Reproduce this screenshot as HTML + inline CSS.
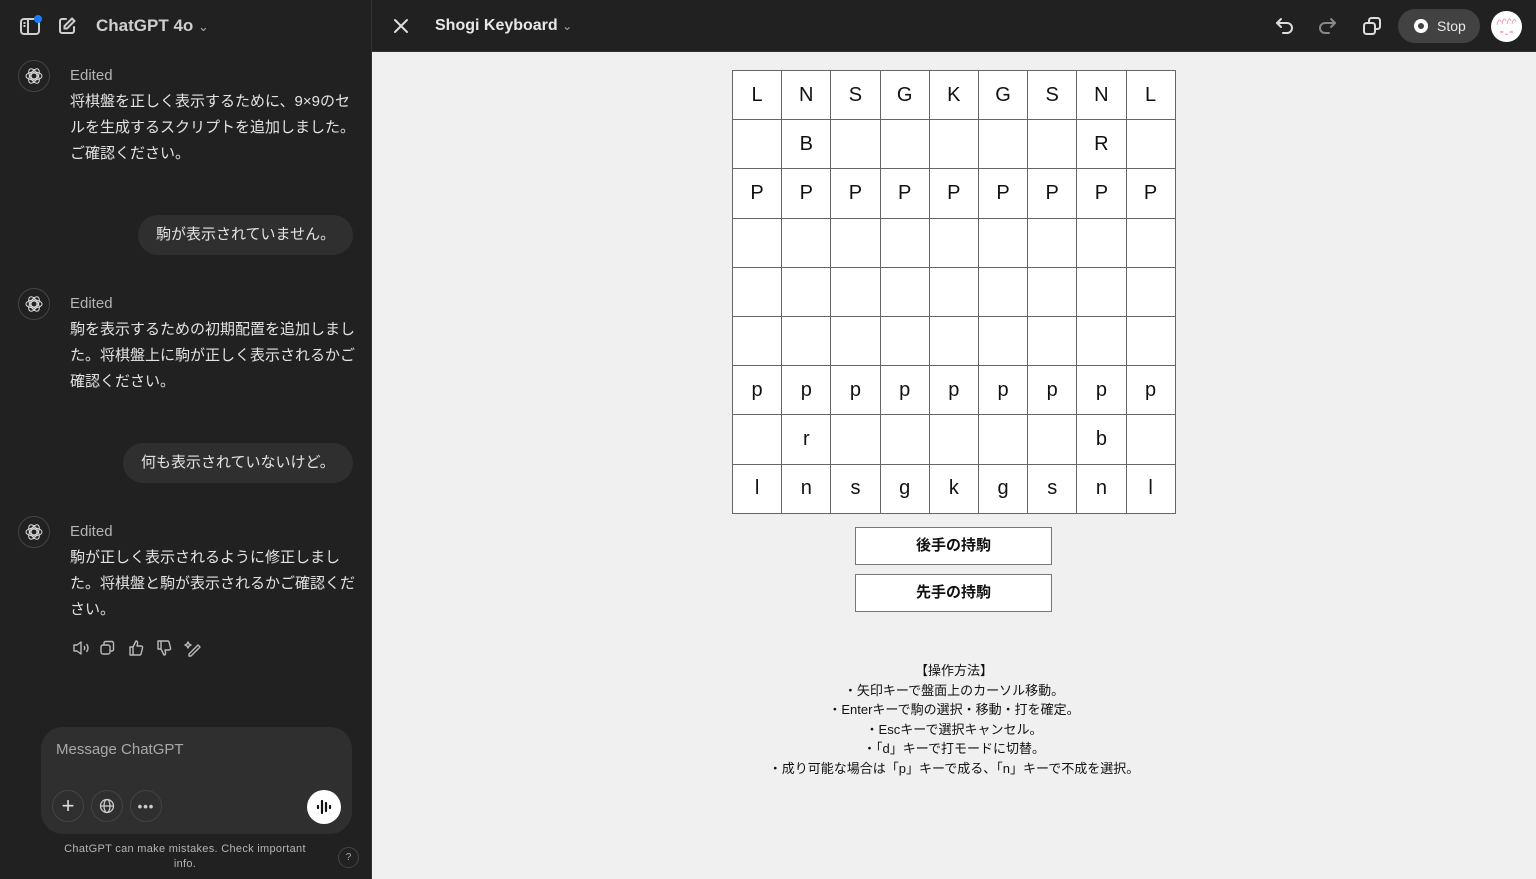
<!DOCTYPE html>
<html><head><meta charset="utf-8"><style>
*{box-sizing:border-box;margin:0;padding:0}
body{width:1536px;height:879px;overflow:hidden;background:#212121;font-family:"Liberation Sans","Noto Sans CJK JP",sans-serif;position:relative;color:#ececec}
.abs{position:absolute}
.side{left:0;top:0;width:371px;height:879px;background:#212121}
.divider{left:371px;top:0;width:1px;height:879px;background:#333}
.top{left:372px;top:0;width:1164px;height:52px;background:#212121;border-bottom:1px solid #333}
.main{left:372px;top:52px;width:1164px;height:827px;background:#f0f0f0}
.av{width:32px;height:32px;border-radius:50%;border:1px solid #444;display:flex;align-items:center;justify-content:center}
.edited{color:#b4b4b4;font-size:15px}
.msg{font-size:15px;line-height:26px;color:#e3e3e3}
.bubble{background:#2f2f2f;border-radius:20px;height:40px;font-size:15px;line-height:40px;padding:0 18px;color:#e3e3e3}
table{border-collapse:collapse;background:#fff}
td{width:49.2px;height:49.2px;border:1px solid #666;text-align:center;font-size:20px;color:#111;padding:0}
.btn{left:855px;width:197px;height:38px;background:#fff;border:1px solid #777;text-align:center;line-height:36px;font-weight:bold;font-size:15px;color:#111}
.ins{left:690px;width:528px;top:661px;text-align:center;font-size:13px;line-height:19.5px;color:#111}
.cb{width:32px;height:32px;border:1px solid #444;border-radius:50%;display:flex;align-items:center;justify-content:center}
</style></head><body>
<div class="abs side"></div>
<div class="abs divider"></div>
<svg class="abs" style="left:19px;top:15px" width="24" height="22" viewBox="0 0 24 22" fill="none" stroke="#cfcfcf" stroke-width="2"><rect x="2" y="4" width="18" height="15" rx="3"/><line x1="9" y1="4" x2="9" y2="19"/><line x1="4.5" y1="8" x2="6.5" y2="8"/><line x1="4.5" y1="11" x2="6.5" y2="11"/></svg>
<div class="abs" style="left:34px;top:15px;width:8px;height:8px;border-radius:50%;background:#1a7cff"></div>
<svg class="abs" style="left:57px;top:16px" width="20" height="20" viewBox="0 0 20 20" fill="none" stroke="#cfcfcf" stroke-width="2" stroke-linecap="round"><path d="M9 3H5a2 2 0 0 0-2 2v10a2 2 0 0 0 2 2h10a2 2 0 0 0 2-2v-4"/><path d="M15 2.5l2.5 2.5L10 12.5H7.5V10z"/></svg>
<div class="abs" style="left:96px;top:16px;font-size:17px;font-weight:bold;color:#cfcfcf">ChatGPT 4o <span style="font-weight:normal;font-size:13px;color:#aaa">&#8964;</span></div>

<div class="abs av" style="left:18px;top:60px"><svg width="20" height="20" viewBox="0 0 20 20" fill="none" stroke="#ddd" stroke-width="1"><circle cx="10" cy="10" r="3"/><ellipse cx="10" cy="10" rx="8" ry="4"/><ellipse cx="10" cy="10" rx="8" ry="4" transform="rotate(60 10 10)"/><ellipse cx="10" cy="10" rx="8" ry="4" transform="rotate(120 10 10)"/></svg></div>
<div class="abs edited" style="left:70px;top:67px">Edited</div>
<div class="abs msg" style="left:70px;top:89px;width:290px">将棋盤を正しく表示するために、9×9のセルを生成するスクリプトを追加しました。ご確認ください。</div>
<div class="abs bubble" style="left:138px;top:215px">駒が表示されていません。</div>

<div class="abs av" style="left:18px;top:288px"><svg width="20" height="20" viewBox="0 0 20 20" fill="none" stroke="#ddd" stroke-width="1"><circle cx="10" cy="10" r="3"/><ellipse cx="10" cy="10" rx="8" ry="4"/><ellipse cx="10" cy="10" rx="8" ry="4" transform="rotate(60 10 10)"/><ellipse cx="10" cy="10" rx="8" ry="4" transform="rotate(120 10 10)"/></svg></div>
<div class="abs edited" style="left:70px;top:295px">Edited</div>
<div class="abs msg" style="left:70px;top:317px;width:290px">駒を表示するための初期配置を追加しました。将棋盤上に駒が正しく表示されるかご確認ください。</div>
<div class="abs bubble" style="left:123px;top:443px">何も表示されていないけど。</div>

<div class="abs av" style="left:18px;top:516px"><svg width="20" height="20" viewBox="0 0 20 20" fill="none" stroke="#ddd" stroke-width="1"><circle cx="10" cy="10" r="3"/><ellipse cx="10" cy="10" rx="8" ry="4"/><ellipse cx="10" cy="10" rx="8" ry="4" transform="rotate(60 10 10)"/><ellipse cx="10" cy="10" rx="8" ry="4" transform="rotate(120 10 10)"/></svg></div>
<div class="abs edited" style="left:70px;top:523px">Edited</div>
<div class="abs msg" style="left:70px;top:545px;width:290px">駒が正しく表示されるように修正しました。将棋盤と駒が表示されるかご確認ください。</div>

<svg class="abs" style="left:72px;top:639px" width="134" height="18" viewBox="0 0 134 18" fill="none" stroke="#bbb" stroke-width="1.4" stroke-linejoin="round">
<path d="M2 6h3l4-3v12l-4-3H2z"/><path d="M12 7q1.5 2 0 4M14.5 5q3 4 0 8"/>
<rect x="29" y="6" width="9" height="9" rx="2"/><path d="M32 6V4a1.5 1.5 0 0 1 1.5-1.5H40A1.5 1.5 0 0 1 41.5 4v6.5A1.5 1.5 0 0 1 40 12h-2"/>
<path d="M58 8h3v8h-3zM61 8l3-6q2 0 1.5 3L65 7h4a1.5 1.5 0 0 1 1.5 2l-1.5 6a1.5 1.5 0 0 1-1.5 1H61"/>
<path d="M86 10h3V2h-3zM89 10l3 6q2 0 1.5-3L93 11h4a1.5 1.5 0 0 0 1.5-2l-1.5-6a1.5 1.5 0 0 0-1.5-1H89"/>
<path d="M117 15l9-9 2 2-9 9h-2zM116 3l1 2 2 1-2 1-1 2-1-2-2-1 2-1z"/>
</svg>

<div class="abs" style="left:41px;top:727px;width:311px;height:107px;background:#2f2f2f;border-radius:22px"></div>
<div class="abs" style="left:56px;top:741px;font-size:15px;color:#a8a8a8">Message ChatGPT</div>
<div class="abs cb" style="left:52px;top:790px;color:#ddd;font-size:22px;line-height:1">+</div>
<div class="abs cb" style="left:91px;top:790px"><svg width="16" height="16" viewBox="0 0 16 16" fill="none" stroke="#ccc" stroke-width="1.3"><circle cx="8" cy="8" r="6.5"/><ellipse cx="8" cy="8" rx="3" ry="6.5"/><line x1="1.5" y1="8" x2="14.5" y2="8"/></svg></div>
<div class="abs cb" style="left:130px;top:790px;color:#ccc;font-size:13px;font-weight:bold;letter-spacing:1px">•••</div>
<div class="abs" style="left:307px;top:790px;width:34px;height:34px;border-radius:50%;background:#fff"><svg width="34" height="34" viewBox="0 0 34 34" stroke="#111" stroke-width="2.2" stroke-linecap="round"><line x1="11" y1="16" x2="11" y2="18"/><line x1="15" y1="11" x2="15" y2="23"/><line x1="19" y1="13" x2="19" y2="21"/><line x1="23" y1="16" x2="23" y2="18"/></svg></div>
<div class="abs" style="left:60px;top:842px;width:250px;text-align:center;font-size:11px;line-height:15px;color:#b4b4b4;letter-spacing:0.3px">ChatGPT can make mistakes. Check important info.</div>
<div class="abs" style="left:338px;top:847px;width:21px;height:21px;border-radius:50%;border:1px solid #444;color:#aaa;font-size:10px;text-align:center;line-height:19px">?</div>

<div class="abs top"></div>
<svg class="abs" style="left:393px;top:18px" width="16" height="16" viewBox="0 0 16 16" stroke="#ddd" stroke-width="2" stroke-linecap="round"><line x1="2" y1="2" x2="14" y2="14"/><line x1="14" y1="2" x2="2" y2="14"/></svg>
<div class="abs" style="left:435px;top:17px;font-size:16px;font-weight:bold;color:#e8e8e8">Shogi Keyboard <span style="font-weight:normal;font-size:12px;color:#aaa">&#8964;</span></div>
<svg class="abs" style="left:1274px;top:15px" width="22" height="22" viewBox="0 0 22 22" fill="none" stroke="#ddd" stroke-width="2" stroke-linecap="round" stroke-linejoin="round"><path d="M7 4L3 8l4 4"/><path d="M3 8h10a5 5 0 0 1 0 10H9"/></svg>
<svg class="abs" style="left:1316px;top:15px" width="22" height="22" viewBox="0 0 22 22" fill="none" stroke="#888" stroke-width="2" stroke-linecap="round" stroke-linejoin="round"><path d="M15 4l4 4-4 4"/><path d="M19 8H9a5 5 0 0 0 0 10h4"/></svg>
<svg class="abs" style="left:1361px;top:15px" width="22" height="22" viewBox="0 0 22 22" fill="none" stroke="#ddd" stroke-width="2" stroke-linejoin="round"><rect x="3" y="8" width="11" height="11" rx="2.5"/><path d="M8 8V5.5A2.5 2.5 0 0 1 10.5 3h6A2.5 2.5 0 0 1 19 5.5v6a2.5 2.5 0 0 1-2.5 2.5H14"/></svg>
<div class="abs" style="left:1398px;top:9px;width:82px;height:34px;border-radius:17px;background:#424242"></div>
<div class="abs" style="left:1414px;top:19px;width:14px;height:14px;border-radius:50%;background:#fff"><div style="margin:4px;width:6px;height:6px;border-radius:50%;background:#424242"></div></div>
<div class="abs" style="left:1437px;top:18px;font-size:14px;color:#e8e8e8">Stop</div>
<div class="abs" style="left:1491px;top:11px;width:31px;height:31px;border-radius:50%;background:#fff;overflow:hidden"><svg width="31" height="31" viewBox="0 0 31 31" fill="none" stroke="#e39bb8" stroke-width="0.9"><path d="M6 14c1-5 3-7 4-3M11 13c1-5 3-7 4-3M16 13c1-5 3-7 4-3M21 13c1-5 3-6 4-2"/><path d="M9 20l3 1-3 1M22 20l-3 1 3 1M14 23q1.5 1 3 0"/></svg></div>

<div class="abs main"></div>
<table class="abs" style="left:732px;top:70px">
<tr><td>L</td><td>N</td><td>S</td><td>G</td><td>K</td><td>G</td><td>S</td><td>N</td><td>L</td></tr>
<tr><td></td><td>B</td><td></td><td></td><td></td><td></td><td></td><td>R</td><td></td></tr>
<tr><td>P</td><td>P</td><td>P</td><td>P</td><td>P</td><td>P</td><td>P</td><td>P</td><td>P</td></tr>
<tr><td></td><td></td><td></td><td></td><td></td><td></td><td></td><td></td><td></td></tr>
<tr><td></td><td></td><td></td><td></td><td></td><td></td><td></td><td></td><td></td></tr>
<tr><td></td><td></td><td></td><td></td><td></td><td></td><td></td><td></td><td></td></tr>
<tr><td>p</td><td>p</td><td>p</td><td>p</td><td>p</td><td>p</td><td>p</td><td>p</td><td>p</td></tr>
<tr><td></td><td>r</td><td></td><td></td><td></td><td></td><td></td><td>b</td><td></td></tr>
<tr><td>l</td><td>n</td><td>s</td><td>g</td><td>k</td><td>g</td><td>s</td><td>n</td><td>l</td></tr>
</table>
<div class="abs btn" style="top:527px">後手の持駒</div>
<div class="abs btn" style="top:574px">先手の持駒</div>
<div class="abs ins">【操作方法】<br>・矢印キーで盤面上のカーソル移動。<br>・Enterキーで駒の選択・移動・打を確定。<br>・Escキーで選択キャンセル。<br>・「d」キーで打モードに切替。<br>・成り可能な場合は「p」キーで成る、「n」キーで不成を選択。</div>
</body></html>
